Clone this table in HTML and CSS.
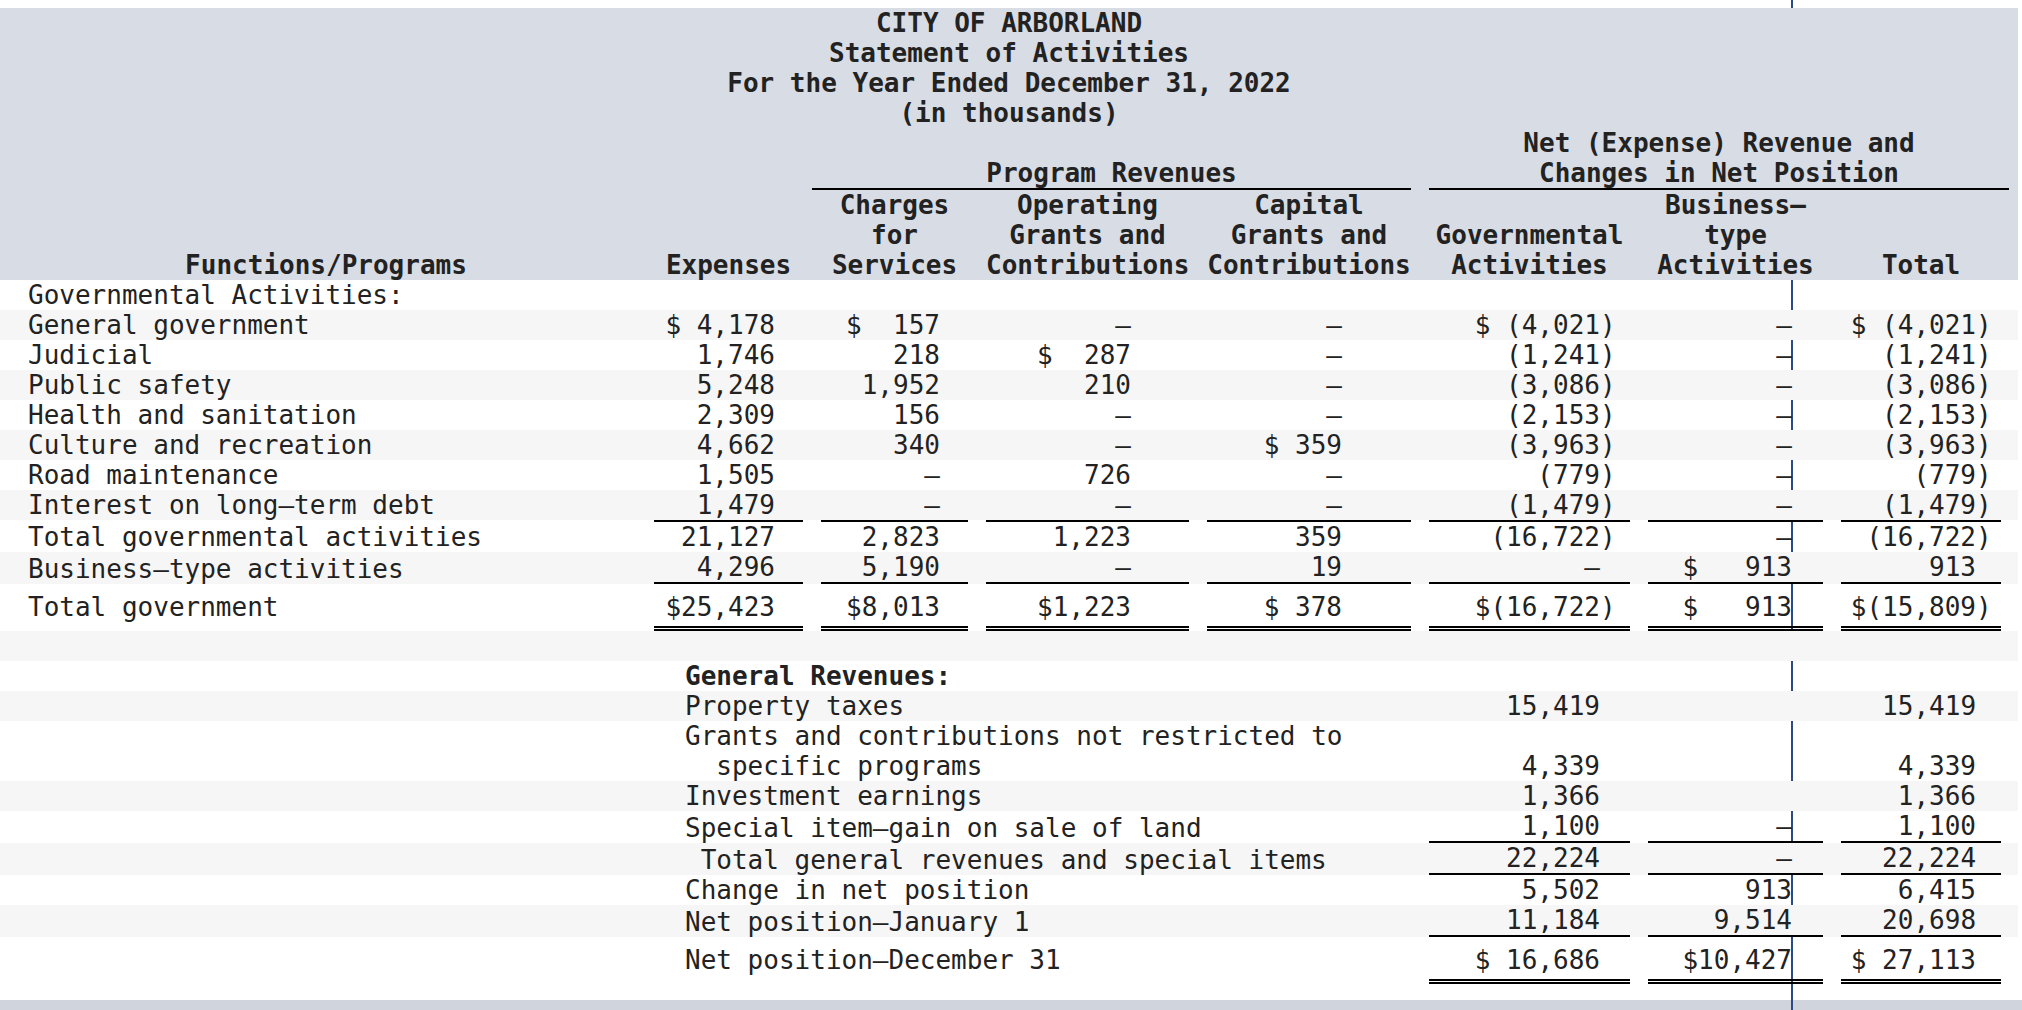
FILE: index.html
```html
<!DOCTYPE html>
<html lang="en">
<head>
  <meta charset="UTF-8">
  <title>Statement of Activities | City of Arborland</title>
  <link rel="stylesheet" href="styles.css">
</head>
<body>

  <!-- column guide that runs behind the sheet -->
  <div class="guide"></div>

  <table class="soa">
    <colgroup>
      <col class="w-lbl">
      <col class="w-exp">
      <col class="w-chg">
      <col class="w-op">
      <col class="w-cap">
      <col class="w-gov">
      <col class="w-bus">
      <col class="w-tot">
    </colgroup>

    <thead>
      <tr>
        <th colspan="8" class="title">CITY OF ARBORLAND<br>Statement of Activities<br>For the Year Ended December 31, 2022<br>(in thousands)</th>
      </tr>
      <tr>
        <th colspan="2"></th>
        <th colspan="3" class="grp pr"><div class="u">Program Revenues</div></th>
        <th colspan="3" class="grp"><div class="u">Net (Expense) Revenue and<br>Changes in Net Position</div></th>
      </tr>
      <tr>
        <th class="fn">Functions/Programs</th>
        <th>Expenses</th>
        <th>Charges<br>for<br>Services</th>
        <th>Operating<br>Grants and<br>Contributions</th>
        <th>Capital<br>Grants and<br>Contributions</th>
        <th>Governmental<br>Activities</th>
        <th>Business–<br>type<br>Activities</th>
        <th class="tot">Total</th>
      </tr>
    </thead>

    <tbody>
      <tr>
        <td class="lbl">Governmental Activities:</td>
        <td></td><td></td><td></td><td></td><td></td><td></td><td></td>
      </tr>
      <tr>
        <td class="lbl">General government</td>
        <td class="e"><div class="v">$ 4,178</div></td>
        <td class="c"><div class="v">$  157</div></td>
        <td class="o"><div class="v">–</div></td>
        <td class="k"><div class="v">–</div></td>
        <td class="g"><div class="v">$ (4,021<span class="rp">)</span></div></td>
        <td class="b"><div class="v">–</div></td>
        <td class="t"><div class="v">$ (4,021<span class="rp">)</span></div></td>
      </tr>
      <tr>
        <td class="lbl">Judicial</td>
        <td class="e"><div class="v">1,746</div></td>
        <td class="c"><div class="v">218</div></td>
        <td class="o"><div class="v">$  287</div></td>
        <td class="k"><div class="v">–</div></td>
        <td class="g"><div class="v">(1,241<span class="rp">)</span></div></td>
        <td class="b"><div class="v">–</div></td>
        <td class="t"><div class="v">(1,241<span class="rp">)</span></div></td>
      </tr>
      <tr>
        <td class="lbl">Public safety</td>
        <td class="e"><div class="v">5,248</div></td>
        <td class="c"><div class="v">1,952</div></td>
        <td class="o"><div class="v">210</div></td>
        <td class="k"><div class="v">–</div></td>
        <td class="g"><div class="v">(3,086<span class="rp">)</span></div></td>
        <td class="b"><div class="v">–</div></td>
        <td class="t"><div class="v">(3,086<span class="rp">)</span></div></td>
      </tr>
      <tr>
        <td class="lbl">Health and sanitation</td>
        <td class="e"><div class="v">2,309</div></td>
        <td class="c"><div class="v">156</div></td>
        <td class="o"><div class="v">–</div></td>
        <td class="k"><div class="v">–</div></td>
        <td class="g"><div class="v">(2,153<span class="rp">)</span></div></td>
        <td class="b"><div class="v">–</div></td>
        <td class="t"><div class="v">(2,153<span class="rp">)</span></div></td>
      </tr>
      <tr>
        <td class="lbl">Culture and recreation</td>
        <td class="e"><div class="v">4,662</div></td>
        <td class="c"><div class="v">340</div></td>
        <td class="o"><div class="v">–</div></td>
        <td class="k"><div class="v">$ 359</div></td>
        <td class="g"><div class="v">(3,963<span class="rp">)</span></div></td>
        <td class="b"><div class="v">–</div></td>
        <td class="t"><div class="v">(3,963<span class="rp">)</span></div></td>
      </tr>
      <tr>
        <td class="lbl">Road maintenance</td>
        <td class="e"><div class="v">1,505</div></td>
        <td class="c"><div class="v">–</div></td>
        <td class="o"><div class="v">726</div></td>
        <td class="k"><div class="v">–</div></td>
        <td class="g"><div class="v">(779<span class="rp">)</span></div></td>
        <td class="b"><div class="v">–</div></td>
        <td class="t"><div class="v">(779<span class="rp">)</span></div></td>
      </tr>
      <tr>
        <td class="lbl">Interest on long–term debt</td>
        <td class="e"><div class="v">1,479</div></td>
        <td class="c"><div class="v">–</div></td>
        <td class="o"><div class="v">–</div></td>
        <td class="k"><div class="v">–</div></td>
        <td class="g"><div class="v">(1,479<span class="rp">)</span></div></td>
        <td class="b"><div class="v">–</div></td>
        <td class="t"><div class="v">(1,479<span class="rp">)</span></div></td>
      </tr>
      <tr class="sub">
        <td class="lbl">Total governmental activities</td>
        <td class="e"><div class="v">21,127</div></td>
        <td class="c"><div class="v">2,823</div></td>
        <td class="o"><div class="v">1,223</div></td>
        <td class="k"><div class="v">359</div></td>
        <td class="g"><div class="v">(16,722<span class="rp">)</span></div></td>
        <td class="b"><div class="v">–</div></td>
        <td class="t"><div class="v">(16,722<span class="rp">)</span></div></td>
      </tr>
      <tr class="rule">
        <td class="lbl">Business–type activities</td>
        <td class="e"><div class="v">4,296</div></td>
        <td class="c"><div class="v">5,190</div></td>
        <td class="o"><div class="v">–</div></td>
        <td class="k"><div class="v">19</div></td>
        <td class="g"><div class="v">–</div></td>
        <td class="b"><div class="v">$   913</div></td>
        <td class="t"><div class="v">913</div></td>
      </tr>
      <tr class="grand">
        <td class="lbl">Total government</td>
        <td class="e"><div class="v">$25,423</div></td>
        <td class="c"><div class="v">$8,013</div></td>
        <td class="o"><div class="v">$1,223</div></td>
        <td class="k"><div class="v">$ 378</div></td>
        <td class="g"><div class="v">$(16,722<span class="rp">)</span></div></td>
        <td class="b"><div class="v">$   913</div></td>
        <td class="t"><div class="v">$(15,809<span class="rp">)</span></div></td>
      </tr>
      <tr class="gap">
        <td colspan="8">&nbsp;</td>
      </tr>

      <!-- General revenues -->
      <tr>
        <td></td>
        <td colspan="4" class="gl"><b>General Revenues:</b></td>
        <td></td><td></td><td></td>
      </tr>
      <tr>
        <td></td>
        <td colspan="4" class="gl">Property taxes</td>
        <td class="g"><div class="v">15,419</div></td>
        <td class="b"></td>
        <td class="t"><div class="v">15,419</div></td>
      </tr>
      <tr>
        <td></td>
        <td colspan="4" class="gl">Grants and contributions not restricted to<br><span class="in2">specific programs</span></td>
        <td class="g"><div class="v">4,339</div></td>
        <td class="b"></td>
        <td class="t"><div class="v">4,339</div></td>
      </tr>
      <tr>
        <td></td>
        <td colspan="4" class="gl">Investment earnings</td>
        <td class="g"><div class="v">1,366</div></td>
        <td class="b"></td>
        <td class="t"><div class="v">1,366</div></td>
      </tr>
      <tr class="rule">
        <td></td>
        <td colspan="4" class="gl">Special item–gain on sale of land</td>
        <td class="g"><div class="v">1,100</div></td>
        <td class="b"><div class="v">–</div></td>
        <td class="t"><div class="v">1,100</div></td>
      </tr>
      <tr class="rule">
        <td></td>
        <td colspan="4" class="gl"><span class="in1">Total general revenues and special items</span></td>
        <td class="g"><div class="v">22,224</div></td>
        <td class="b"><div class="v">–</div></td>
        <td class="t"><div class="v">22,224</div></td>
      </tr>
      <tr>
        <td></td>
        <td colspan="4" class="gl">Change in net position</td>
        <td class="g"><div class="v">5,502</div></td>
        <td class="b"><div class="v">913</div></td>
        <td class="t"><div class="v">6,415</div></td>
      </tr>
      <tr class="rule">
        <td></td>
        <td colspan="4" class="gl">Net position–January 1</td>
        <td class="g"><div class="v">11,184</div></td>
        <td class="b"><div class="v">9,514</div></td>
        <td class="t"><div class="v">20,698</div></td>
      </tr>
      <tr class="grand">
        <td></td>
        <td colspan="4" class="gl">Net position–December 31</td>
        <td class="g"><div class="v">$ 16,686</div></td>
        <td class="b"><div class="v">$10,427</div></td>
        <td class="t"><div class="v">$ 27,113</div></td>
      </tr>
    </tbody>
  </table>

  <div class="foot"></div>

</body>
</html>
```

FILE: styles.css
```css
body {
  margin: 0;
  padding-top: 8px;
  background: #fff;
  color: #222;
  font-family: "DejaVu Sans Mono", monospace;
  font-size: 26px;
  line-height: 30px;
}

/* thin blue guide, sits under the header and striped rows */
.guide {
  position: absolute;
  left: 1791px;
  top: 0;
  width: 2px;
  height: 1010px;
  background: #2c4a86;
  z-index: -1;
}

.soa {
  width: 2018px;
  table-layout: fixed;
  border-collapse: separate;
  border-spacing: 0;
}

.w-lbl { width: 645px; }
.w-exp { width: 167px; }
.w-chg { width: 165px; }
.w-op  { width: 221px; }
.w-cap { width: 222px; }
.w-gov { width: 219px; }
.w-bus { width: 193px; }
.w-tot { width: 186px; }

th,
td {
  padding: 0 9px;
  vertical-align: bottom;
}

thead th {
  background: #d8dce4;
  font-weight: bold;
  text-align: center;
  white-space: nowrap;
}

th.fn {
  padding-left: 16px;
}

th.tot,
td.t {
  padding-right: 17px;
}

.grp .u {
  border-bottom: 2px solid #000;
}

.pr .u {
  margin-left: -9px;
}

tbody tr:nth-child(even) {
  background: #f6f6f6;
}

td.lbl {
  padding-left: 28px;
  white-space: nowrap;
}

td.gl {
  padding-left: 40px;
  white-space: nowrap;
}

.in1 { padding-left: 1ch; }
.in2 { padding-left: 2ch; }

/* numbers */
.v {
  white-space: pre;
  text-align: right;
}

.e .v { padding-right: 28px; }
.c .v { padding-right: 28px; }
.o .v { padding-right: 58px; }
.k .v { padding-right: 69px; }
.g .v { padding-right: 30px; }
.b .v { padding-right: 31px; }
.t .v { padding-right: 25px; }

/* closing paren hangs past the digits */
.rp {
  margin-right: -1ch;
}

.sub .v {
  border-top: 2px solid #000;
}

.rule .v {
  border-bottom: 2px solid #000;
}

.grand .v {
  padding-top: 8px;
  padding-bottom: 4px;
  border-bottom: 5px double #000;
}

.grand td.lbl,
.grand td.gl {
  padding-bottom: 9px;
}

.foot {
  position: relative;
  z-index: -2;
  margin-top: 16px;
  height: 40px;
  width: 2022px;
  background: #d0d4dd;
}
```
